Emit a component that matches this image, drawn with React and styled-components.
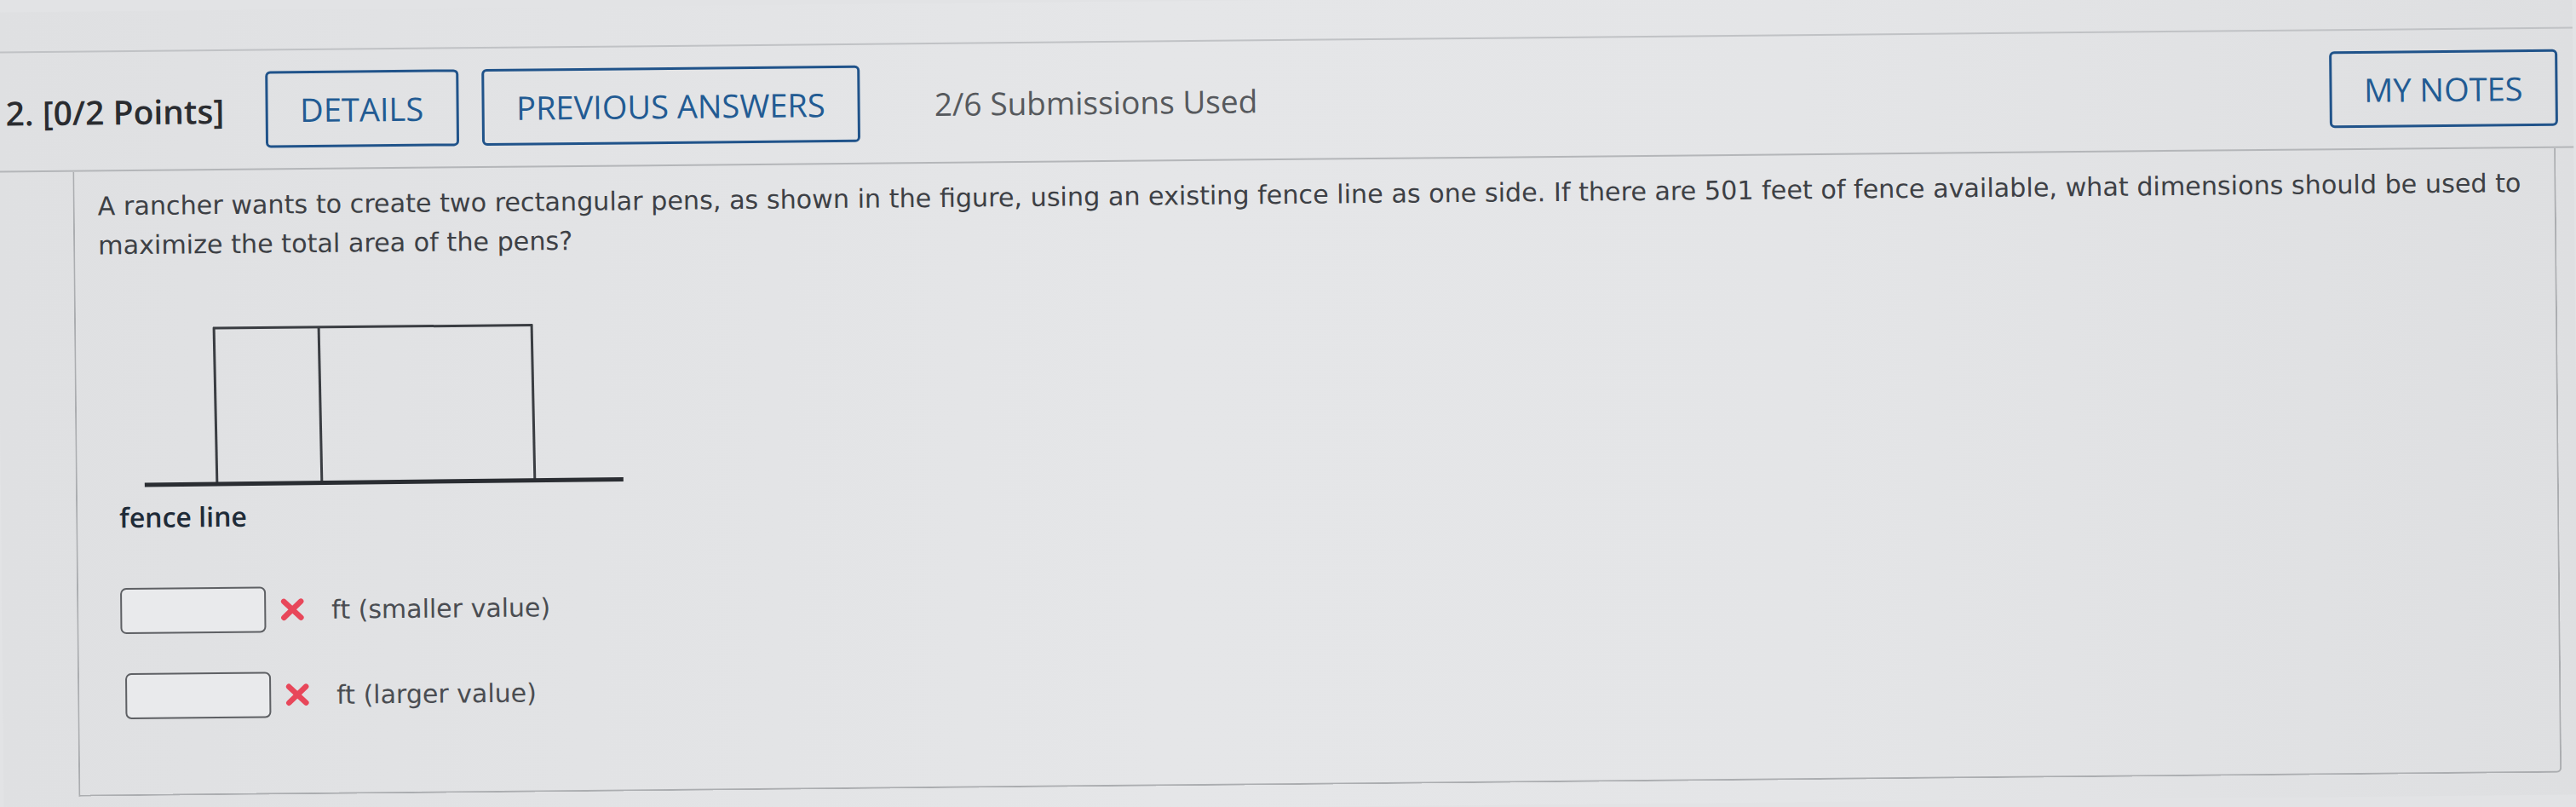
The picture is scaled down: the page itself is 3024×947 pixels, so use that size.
import React from "react";
import styled, { createGlobalStyle } from "styled-components";

const GlobalStyle = createGlobalStyle`
  html, body {
    margin: 0;
    padding: 0;
    background: #e2e3e5;
    overflow: hidden;
  }
  #root {
    width: 3024px;
    height: 947px;
  }
`;

const Page = styled.main`
  width: 3024px;
  height: 947px;
  box-sizing: border-box;
  padding-top: 46px;
  background: linear-gradient(90deg, #dfe0e2 0%, #e5e6e8 45%, #e4e5e7 70%, #dedfe1 100%);
  transform: rotate(-0.55deg);
  transform-origin: 50% 50%;
`;

const QuestionHeader = styled.header`
  display: flex;
  align-items: center;
  height: 142px;
  box-sizing: border-box;
  padding: 0 18px 0 10px;
  border-top: 2px solid #c0c2c5;
  border-bottom: 2px solid #b4b6b9;
  font-family: "Open Sans", "Liberation Sans", sans-serif;
`;

const Points = styled.span`
  font-size: 39px;
  font-weight: 600;
  color: #2a2c30;
  margin-right: 48px;
`;

const HeaderButton = styled.button`
  height: 90px;
  padding: 0 38px;
  margin-right: ${(p) => p.$space || 0}px;
  margin-left: ${(p) => (p.$pushRight ? "auto" : "0")};
  box-sizing: border-box;
  border: 3px solid #20538a;
  border-radius: 6px;
  background: transparent;
  color: #225b93;
  font-family: "Open Sans", "Liberation Sans", sans-serif;
  font-size: 38px;
  font-weight: 400;
  text-transform: uppercase;
  cursor: pointer;
`;

const Submissions = styled.span`
  font-size: 37px;
  color: #56595d;
`;

const Panel = styled.section`
  width: 2915px;
  height: 733px;
  margin-left: 88px;
  box-sizing: border-box;
  padding: 18px 4px 0 27px;
  border: 2px solid #abadb0;
  border-top: none;
  border-radius: 0 0 6px 0;
`;

const Prompt = styled.p`
  margin: 0;
  font-family: "DejaVu Sans", Verdana, sans-serif;
  font-size: 30.2px;
  line-height: 46px;
  color: #3d4045;
`;

const Figure = styled.figure`
  margin: 72px 0 0 22px;
  display: flex;
  flex-direction: column;
  align-items: flex-start;
`;

const FenceLabel = styled.figcaption`
  margin-top: 12px;
  font-family: "Open Sans", "Liberation Sans", sans-serif;
  font-size: 32px;
  font-weight: 600;
  line-height: 44px;
  color: #1f2b38;
`;

const Answers = styled.div`
  margin: 61px 0 0 22px;
  display: flex;
  flex-direction: column;
  gap: 46px;
`;

const AnswerRow = styled.div`
  display: flex;
  align-items: center;
  padding-left: ${(p) => p.$indent || 0}px;
`;

const AnswerInput = styled.input`
  width: 171px;
  height: 54px;
  box-sizing: border-box;
  border: 2px solid #5e6064;
  border-radius: 7px;
  background: #e9eaec;
  margin-right: 16px;
  font-family: "DejaVu Sans", Verdana, sans-serif;
  font-size: 26px;
  padding: 0 10px;
  outline: none;
`;

const WrongMark = styled.svg`
  width: 30px;
  height: 28px;
  margin-right: 31px;
  flex: none;
`;

const Unit = styled.span`
  font-family: "DejaVu Sans", Verdana, sans-serif;
  font-size: 30px;
  color: #4a4d52;
`;

function IncorrectIcon() {
  return (
    <WrongMark viewBox="0 0 30 28" aria-hidden="true">
      <g stroke="#e8475a" strokeWidth="6.5" strokeLinecap="round">
        <line x1="5" y1="4.5" x2="25" y2="23.5" />
        <line x1="25" y1="4.5" x2="5" y2="23.5" />
      </g>
    </WrongMark>
  );
}

function PensDiagram() {
  return (
    <svg width="600" height="190" viewBox="0 0 600 190" aria-hidden="true">
      <g stroke="#3a3d42" fill="none">
        <line x1="112" y1="3" x2="487" y2="3" strokeWidth="3" />
        <line x1="113" y1="2" x2="115" y2="185" strokeWidth="3" />
        <line x1="236" y1="2" x2="238" y2="185" strokeWidth="3" />
        <line x1="486" y1="2" x2="488" y2="185" strokeWidth="3" />
        <line x1="30" y1="186" x2="592" y2="185" strokeWidth="5" stroke="#2a2d32" />
      </g>
    </svg>
  );
}

export default function App() {
  return (
    <>
      <GlobalStyle />
      <Page>
        <QuestionHeader>
          <Points>2. [0/2 Points]</Points>
          <HeaderButton $space={27}>Details</HeaderButton>
          <HeaderButton $space={87}>Previous Answers</HeaderButton>
          <Submissions>2/6 Submissions Used</Submissions>
          <HeaderButton $pushRight>My Notes</HeaderButton>
        </QuestionHeader>
        <Panel>
          <Prompt>
            A rancher wants to create two rectangular pens, as shown in the figure, using an
            existing fence line as one side. If there are 501 feet of fence available, what
            dimensions should be used to maximize the total area of the pens?
          </Prompt>
          <Figure>
            <PensDiagram />
            <FenceLabel>fence line</FenceLabel>
          </Figure>
          <Answers>
            <AnswerRow>
              <AnswerInput type="text" aria-label="smaller value" />
              <IncorrectIcon />
              <Unit>ft (smaller value)</Unit>
            </AnswerRow>
            <AnswerRow $indent={5}>
              <AnswerInput type="text" aria-label="larger value" />
              <IncorrectIcon />
              <Unit>ft (larger value)</Unit>
            </AnswerRow>
          </Answers>
        </Panel>
      </Page>
    </>
  );
}
